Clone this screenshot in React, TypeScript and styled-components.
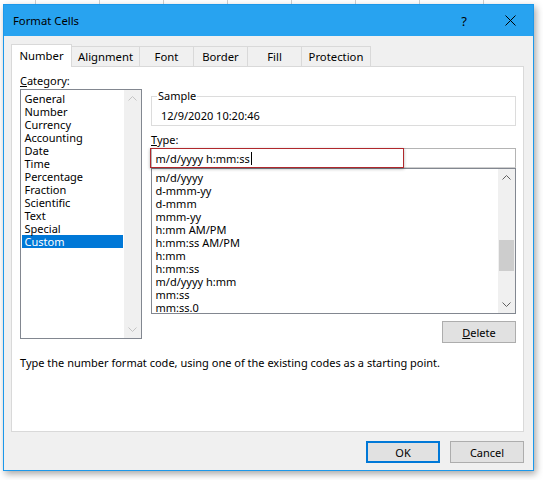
import React from "react";
import styled, { createGlobalStyle } from "styled-components";

const GlobalStyle = createGlobalStyle`
  html, body {
    margin: 0;
    padding: 0;
    background: #fff;
  }
  body {
    font-family: "Noto Sans", "Open Sans", sans-serif;
    font-size: 11px;
    color: #000;
  }
  * {
    box-sizing: border-box;
  }
`;

const tabs = [
  { label: "Number", width: 61 },
  { label: "Alignment", width: 69 },
  { label: "Font", width: 55 },
  { label: "Border", width: 55 },
  { label: "Fill", width: 55 },
  { label: "Protection", width: 70 },
];

const categories = [
  "General",
  "Number",
  "Currency",
  "Accounting",
  "Date",
  "Time",
  "Percentage",
  "Fraction",
  "Scientific",
  "Text",
  "Special",
  "Custom",
];

const formats = [
  "m/d/yyyy",
  "d-mmm-yy",
  "d-mmm",
  "mmm-yy",
  "h:mm AM/PM",
  "h:mm:ss AM/PM",
  "h:mm",
  "h:mm:ss",
  "m/d/yyyy h:mm",
  "mm:ss",
  "mm:ss.0",
];

const Chevron: React.FC<{ up?: boolean; disabled?: boolean }> = ({ up, disabled }) => (
  <svg width="9" height="5" viewBox="0 0 9 5">
    <polyline
      points={up ? "0.5,4.5 4.5,0.5 8.5,4.5" : "0.5,0.5 4.5,4.5 8.5,0.5"}
      fill="none"
      stroke={disabled ? "#c4c4c4" : "#606060"}
      strokeWidth="1"
    />
  </svg>
);

const CloseIcon = () => (
  <svg width="11" height="11" viewBox="0 0 11 11">
    <path d="M0.5 0.5 L10.5 10.5 M10.5 0.5 L0.5 10.5" stroke="#000" strokeWidth="1" />
  </svg>
);

const ScrollBar: React.FC<{ disabled?: boolean; thumbTop?: number; thumbHeight?: number }> = ({
  disabled,
  thumbTop,
  thumbHeight,
}) => (
  <Scroll>
    <ArrowBtn>
      <Chevron up disabled={disabled} />
    </ArrowBtn>
    <Track>{!disabled && <Thumb $top={thumbTop ?? 0} $height={thumbHeight ?? 30} />}</Track>
    <ArrowBtn>
      <Chevron disabled={disabled} />
    </ArrowBtn>
  </Scroll>
);

const App: React.FC = () => {
  return (
    <Desktop>
      <GlobalStyle />
      <Window>
        <TitleBar>
          <Title>Format Cells</Title>
          <CaptionButton>
            <Help>?</Help>
          </CaptionButton>
          <CaptionButton>
            <CloseIcon />
          </CaptionButton>
        </TitleBar>

        <Client>
          <TabStrip>
            {tabs.map((t, i) => (
              <Tab key={t.label} $w={t.width} $active={i === 0}>
                {t.label}
              </Tab>
            ))}
          </TabStrip>

          <Panel>
            <Columns>
              <div>
                <Label>
                  <u>C</u>ategory:
                </Label>
                <CategoryBox>
                  <Items>
                    {categories.map((c) => (
                      <Item key={c} $selected={c === "Custom"}>
                        {c}
                      </Item>
                    ))}
                  </Items>
                  <ScrollBar disabled />
                </CategoryBox>
              </div>

              <RightCol>
                <Group>
                  <GroupTitle>Sample</GroupTitle>
                  <SampleText>12/9/2020 10:20:46</SampleText>
                </Group>

                <TypeLabel>
                  <u>T</u>ype:
                </TypeLabel>
                <InputWrap>
                  <TypeInput>
                    m/d/yyyy h:mm:ss
                    <Caret />
                  </TypeInput>
                  <Marker />
                </InputWrap>

                <FormatBox>
                  <Items>
                    {formats.map((f) => (
                      <Item key={f}>{f}</Item>
                    ))}
                  </Items>
                  <ScrollBar thumbTop={54} thumbHeight={31} />
                </FormatBox>

                <ButtonRow>
                  <Button>
                    <u>D</u>elete
                  </Button>
                </ButtonRow>
              </RightCol>
            </Columns>

            <Hint>Type the number format code, using one of the existing codes as a starting point.</Hint>
          </Panel>

          <Footer>
            <Button $default>OK</Button>
            <Button>Cancel</Button>
          </Footer>
        </Client>
      </Window>
    </Desktop>
  );
};

export default App;

const Desktop = styled.div`
  width: 543px;
  height: 480px;
  overflow: hidden;
  padding: 4px 0 0 3px;
  background: linear-gradient(to right, #cfcfcf 1px, transparent 1px) 35px 0 / 64px 4px repeat-x, #fff;
`;

const Window = styled.div`
  width: 531px;
  height: 467px;
  display: flex;
  flex-direction: column;
  border: 1px solid #1c98ea;
  background: #f0f0f0;
  box-shadow: 2px 3px 7px rgba(0, 0, 0, 0.35);
`;

const TitleBar = styled.div`
  height: 31px;
  flex: none;
  display: flex;
  align-items: center;
  padding-left: 9px;
  background: #28a3f0;
`;

const Title = styled.div`
  flex: 1;
  font-size: 11.3px;
  line-height: 16px;
`;

const CaptionButton = styled.div`
  width: 46px;
  height: 31px;
  display: flex;
  align-items: center;
  justify-content: center;
`;

const Help = styled.span`
  font-size: 13px;
  line-height: 16px;
`;

const Client = styled.div`
  flex: 1;
  display: flex;
  flex-direction: column;
  padding: 8px 9px 8px 7px;
`;

const TabStrip = styled.div`
  height: 22px;
  display: flex;
  align-items: flex-end;
  position: relative;
  z-index: 1;
`;

const Tab = styled.div<{ $active?: boolean; $w: number }>`
  width: ${(p) => p.$w}px;
  height: ${(p) => (p.$active ? 23 : 20)}px;
  margin-bottom: ${(p) => (p.$active ? -1 : 0)}px;
  margin-left: -1px;
  display: flex;
  align-items: center;
  justify-content: center;
  padding-bottom: ${(p) => (p.$active ? 1 : 0)}px;
  font-size: 11.3px;
  background: ${(p) => (p.$active ? "#fff" : "#f0f0f0")};
  border: 1px solid #d9d9d9;
  border-bottom: none;
  position: relative;
  z-index: ${(p) => (p.$active ? 2 : 1)};

  &:first-child {
    margin-left: 0;
  }
`;

const Panel = styled.div`
  height: 366px;
  flex: none;
  background: #fff;
  border: 1px solid #d9d9d9;
  padding: 6px 7px 0 8px;
`;

const Columns = styled.div`
  display: grid;
  grid-template-columns: 122px 1fr;
  column-gap: 9px;
  align-items: start;
`;

const Label = styled.div`
  line-height: 16px;
`;

const ListFrame = styled.div`
  display: flex;
  background: #fff;
  border: 1px solid #828790;
  overflow: hidden;
`;

const CategoryBox = styled(ListFrame)`
  height: 250px;
`;

const FormatBox = styled(ListFrame)`
  height: 146px;
`;

const Items = styled.div`
  flex: 1;
  padding-top: 2px;
  overflow: hidden;
`;

const Item = styled.div<{ $selected?: boolean }>`
  height: 13px;
  line-height: 13px;
  margin: 0 1px;
  padding-left: 2.5px;
  white-space: nowrap;
  background: ${(p) => (p.$selected ? "#0078d7" : "transparent")};
  color: ${(p) => (p.$selected ? "#fff" : "#000")};
`;

const Scroll = styled.div`
  width: 17px;
  flex: none;
  display: flex;
  flex-direction: column;
  background: #f0f0f0;
`;

const ArrowBtn = styled.div`
  height: 17px;
  flex: none;
  display: flex;
  align-items: center;
  justify-content: center;
`;

const Track = styled.div`
  flex: 1;
  padding: 0 1px;
`;

const Thumb = styled.div<{ $top: number; $height: number }>`
  margin-top: ${(p) => p.$top}px;
  height: ${(p) => p.$height}px;
  background: #cdcdcd;
`;

const RightCol = styled.div`
  padding-top: 15px;
`;

const Group = styled.fieldset`
  margin: 0;
  padding: 4px 0 1px 0;
  min-width: 0;
  border: 1px solid #dcdcdc;
`;

const GroupTitle = styled.legend`
  margin-left: 5px;
  padding: 0 1px;
  line-height: 16px;
`;

const SampleText = styled.div`
  padding-left: 9px;
  line-height: 16px;
`;

const TypeLabel = styled(Label)`
  margin-top: 6px;
`;

const InputWrap = styled.div`
  position: relative;
`;

const TypeInput = styled.div`
  height: 20px;
  display: flex;
  align-items: center;
  padding-left: 3.5px;
  background: #fff;
  border: 1px solid #b4b4b4;
  border-bottom-color: #cfcfcf;
`;

const Caret = styled.span`
  width: 1px;
  height: 13px;
  margin-left: 1px;
  background: #000;
`;

/* red highlight drawn around the typed format code */
const Marker = styled.div`
  position: absolute;
  left: -1px;
  top: 0;
  width: 254px;
  height: 20px;
  border: 1px solid #b0282c;
  box-shadow: 0 1px 3px rgba(0, 0, 0, 0.3);
  pointer-events: none;
`;

const ButtonRow = styled.div`
  margin-top: 7px;
  display: flex;
  justify-content: flex-end;
`;

const Button = styled.button<{ $default?: boolean }>`
  width: 74px;
  height: 22px;
  padding: 0;
  font: inherit;
  color: #000;
  background: #e1e1e1;
  border: ${(p) => (p.$default ? "2px solid #0078d7" : "1px solid #adadad")};
`;

const Hint = styled.div`
  margin-top: 12px;
  line-height: 16px;
`;

const Footer = styled.div`
  margin-top: 9px;
  display: flex;
  justify-content: flex-end;
  gap: 10px;
`;
